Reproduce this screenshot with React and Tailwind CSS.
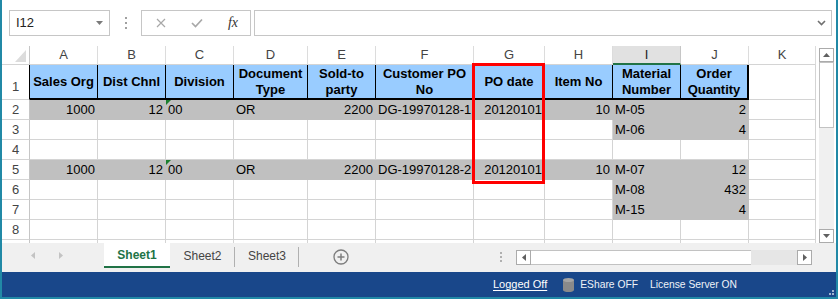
import React from 'react';
import clsx from 'clsx';

const COLW = ['w-[68px]','w-[68px]','w-[68px]','w-[74px]','w-[68px]','w-[98px]','w-[71px]','w-[68px]','w-[68px]','w-[68px]','w-[67px]'];
const LETTERS = ['A','B','C','D','E','F','G','H','I','J','K'];
const HEAD = [['Sales Org'],['Dist Chnl'],['Division'],['Document','Type'],['Sold-to','party'],['Customer PO','No'],['PO date'],['Item No'],['Material','Number'],['Order','Quantity'],null];

const g = (t, a) => ({ t, a, f: true });
const E = {};

const ROWS = [
  { k: 2, n: 2, cells: [g('1000','r'), g('12','r'), { t: '00', a: 'l', f: true, tri: true }, g('OR','l'), g('2200','r'), g('DG-19970128-1','l'), g('20120101','r'), g('10','r'), g('M-05','l'), g('2','r'), E] },
  { k: 3, n: 3, cells: [E, E, E, E, E, E, E, E, g('M-06','l'), g('4','r'), E] },
  { k: 4, n: 4, cells: [E, E, E, E, E, E, E, E, E, E, E] },
  { k: 5, n: 5, cells: [g('1000','r'), g('12','r'), { t: '00', a: 'l', f: true, tri: true }, g('OR','l'), g('2200','r'), g('DG-19970128-2','l'), g('20120101','r'), g('10','r'), g('M-07','l'), g('12','r'), E] },
  { k: 6, n: 6, cells: [E, E, E, E, E, E, E, E, g('M-08','l'), g('432','r'), E] },
  { k: 7, n: 7, cells: [E, E, E, E, E, E, E, E, g('M-15','l'), g('4','r'), E] },
  { k: 8, n: 8, cells: [E, E, E, E, E, E, E, E, E, E, E] },
  { k: 9, n: '', cells: [E, E, E, E, E, E, E, E, E, E, E] },
];

function DataRow({ n, cells }) {
  return (
    <div className="flex h-[20px] shrink-0">
      <div className="w-[28px] shrink-0 flex items-center justify-center border-r border-b border-r-[#c6c6c6] border-b-[#d4d4d4] text-[#444] text-[13px]">{n}</div>
      {COLW.map((w, i) => {
        const c = cells[i] || {};
        return (
          <div
            key={i}
            className={clsx(
              'relative shrink-0 h-full border-r border-b flex items-center whitespace-nowrap text-[13px] text-black',
              w,
              c.f ? 'bg-[#c0c0c0] border-[#c0c0c0]' : 'border-[#d4d4d4]',
              c.a === 'r' ? 'justify-end pr-[2px]' : 'justify-start pl-[2px]'
            )}
          >
            {c.tri && (
              <svg className="absolute top-0 left-0" width="5" height="5" viewBox="0 0 5 5">
                <polygon points="0,0 5,0 0,5" fill="#1a7f2e" />
              </svg>
            )}
            {c.t}
          </div>
        );
      })}
    </div>
  );
}

function Tri({ dir, color = '#606060', w = 7, h = 4 }) {
  let pts;
  if (dir === 'up') pts = `0,${h} ${w},${h} ${w / 2},0`;
  else if (dir === 'down') pts = `0,0 ${w},0 ${w / 2},${h}`;
  else if (dir === 'left') pts = `${w},0 ${w},${h} 0,${h / 2}`;
  else pts = `0,0 0,${h} ${w},${h / 2}`;
  return (
    <svg width={w} height={h} viewBox={`0 0 ${w} ${h}`}>
      <polygon points={pts} fill={color} />
    </svg>
  );
}

export default function App() {
  return (
    <div className="w-[838px] h-[299px] bg-white border-x-2 border-b-2 border-[#2189a6] flex flex-col overflow-hidden relative font-['Liberation_Sans',Arial,sans-serif]">
      {/* Formula bar */}
      <div className="h-[46px] shrink-0 flex items-start pt-[10px]">
        <div className="ml-[7px] w-[101px] h-[26px] border border-[#c6c6c6] flex items-center justify-between pl-[6px] pr-[6px]">
          <span className="text-[13px] text-[#222]">I12</span>
          <Tri dir="down" color="#7a7a7a" w={7} h={4} />
        </div>
        <div className="w-[31px] h-[26px] flex flex-col items-center justify-center gap-[3px]">
          <div className="w-[2px] h-[2px] bg-[#a0a0a0]" />
          <div className="w-[2px] h-[2px] bg-[#a0a0a0]" />
          <div className="w-[2px] h-[2px] bg-[#a0a0a0]" />
        </div>
        <div className="w-[110px] h-[26px] border border-[#c6c6c6] flex items-center">
          <div className="w-[36px] flex justify-center pl-[2px]">
            <svg width="10" height="10" viewBox="0 0 10 10">
              <path d="M1 1 L9 9 M9 1 L1 9" stroke="#a8a8a8" strokeWidth="1.2" fill="none" />
            </svg>
          </div>
          <div className="w-[38px] flex justify-center">
            <svg width="12" height="10" viewBox="0 0 12 10">
              <path d="M1 5 L4.5 8.5 L11 1.5" stroke="#a8a8a8" strokeWidth="1.7" fill="none" />
            </svg>
          </div>
          <div className="w-[34px] flex justify-center">
            <span className="font-['Liberation_Serif',serif] italic text-[14px] text-[#333] leading-none">fx</span>
          </div>
        </div>
        <div className="ml-[3px] w-[578px] h-[26px] border border-[#c6c6c6] flex items-center justify-end pr-[5px]">
          <svg width="9" height="6" viewBox="0 0 9 6">
            <path d="M1 1 L4.5 4.5 L8 1" stroke="#707070" strokeWidth="1.6" fill="none" />
          </svg>
        </div>
      </div>

      {/* Grid + vertical scrollbar */}
      <div className="h-[197px] shrink-0 flex">
        <div className="w-[814px] shrink-0 flex flex-col overflow-hidden">
          {/* column letters */}
          <div className="flex h-[19px] shrink-0">
            <div className="w-[28px] shrink-0 border-r border-b border-r-[#c6c6c6] border-b-[#d4d4d4] flex items-end justify-end pr-[3px] pb-[2px]">
              <svg width="11" height="12" viewBox="0 0 11 12">
                <polygon points="11,0 11,12 0,12" fill="#dcdcdc" />
              </svg>
            </div>
            {COLW.map((w, i) => (
              <div
                key={i}
                className={clsx(
                  'shrink-0 h-full border-r flex items-center justify-center text-[13px]',
                  w,
                  i === 8 ? 'bg-[#e1e1e1] border-r-[#c6c6c6] border-b-2 border-b-[#217346] text-[#222]' : 'border-r-[#dcdcdc] border-b border-b-[#d4d4d4] text-[#444]'
                )}
              >
                {LETTERS[i]}
              </div>
            ))}
          </div>
          {/* header row 1 */}
          <div className="flex h-[35px] shrink-0">
            <div className="w-[28px] shrink-0 flex items-end justify-center pb-[3px] border-r border-b border-r-black border-b-[#d4d4d4] text-[#444] text-[13px]">1</div>
            {COLW.map((w, i) =>
              HEAD[i] ? (
                <div
                  key={i}
                  className={clsx(
                    'shrink-0 h-full bg-[#99ccff] border-b-2 border-b-black flex flex-col items-center justify-center text-center font-bold text-[13px] leading-[16px] text-black whitespace-nowrap',
                    w,
                    i === 9 ? 'border-r-2 border-r-black' : 'border-r border-r-black'
                  )}
                >
                  {HEAD[i].map((l, k) => (
                    <div key={k}>{l}</div>
                  ))}
                </div>
              ) : (
                <div key={i} className={clsx('shrink-0 h-full border-r border-b border-[#d4d4d4]', w)} />
              )
            )}
          </div>
          {ROWS.map((r) => (
            <DataRow key={r.k} n={r.n} cells={r.cells} />
          ))}
        </div>
        <div className="w-[3px] shrink-0" />
        <div className="w-[15px] shrink-0 flex flex-col pt-[2px]">
          <div className="h-[14px] shrink-0 border border-[#ababab] bg-white flex items-center justify-center">
            <Tri dir="up" color="#606060" w={7} h={4} />
          </div>
          <div className="h-[66px] shrink-0 border border-[#c2c2c2] bg-white" />
          <div className="flex-1 bg-[#f0f0f0]" />
          <div className="h-[14px] shrink-0 border border-[#ababab] bg-white flex items-center justify-center">
            <Tri dir="down" color="#606060" w={7} h={4} />
          </div>
        </div>
      </div>

      {/* Sheet tabs + horizontal scrollbar */}
      <div className="h-[29px] shrink-0 bg-[#f0f0f0] flex items-start">
        <div className="w-[102px] h-[25px] shrink-0 flex items-center">
          <div className="ml-[29px]"><Tri dir="left" color="#c3c3c3" w={4} h={7} /></div>
          <div className="ml-[24px]"><Tri dir="right" color="#c3c3c3" w={4} h={7} /></div>
        </div>
        <div className="w-[66px] h-[25px] shrink-0 bg-white border-b-2 border-[#217346] flex items-center justify-center text-[12px] font-bold text-[#217346]">Sheet1</div>
        <div className="w-[65px] h-[25px] shrink-0 flex items-center justify-center text-[12px] text-[#444] relative">
          Sheet2
          <div className="absolute right-0 top-[4px] h-[20px] w-[1px] bg-[#b0b0b0]" />
        </div>
        <div className="w-[64px] h-[25px] shrink-0 flex items-center justify-center text-[12px] text-[#444] relative">
          Sheet3
          <div className="absolute right-0 top-[4px] h-[20px] w-[1px] bg-[#b0b0b0]" />
        </div>
        <div className="w-[84px] h-[25px] shrink-0 flex items-center justify-center pt-[2px]">
          <svg width="16" height="16" viewBox="0 0 16 16">
            <circle cx="8" cy="8" r="7" stroke="#7d7d7d" strokeWidth="1.3" fill="none" />
            <path d="M4.5 8 H11.5 M8 4.5 V11.5" stroke="#7d7d7d" strokeWidth="1.5" />
          </svg>
        </div>
        <div className="w-[133px] h-[25px] shrink-0 flex flex-col items-end justify-center gap-[2px] pr-[14px] pt-[3px]">
          <div className="w-[2px] h-[2px] bg-[#b0b0b0]" />
          <div className="w-[2px] h-[2px] bg-[#b0b0b0]" />
          <div className="w-[2px] h-[2px] bg-[#b0b0b0]" />
        </div>
        <div className="mt-[7px] w-[296px] h-[15px] shrink-0 flex">
          <div className="w-[15px] h-full border border-[#ababab] bg-white flex items-center justify-center">
            <Tri dir="left" color="#606060" w={4} h={7} />
          </div>
          <div className="w-[220px] h-full border-y border-[#c2c2c2] bg-white" />
          <div className="flex-1 h-full bg-[#e6e6e6]" />
          <div className="w-[15px] h-full border border-[#ababab] bg-white flex items-center justify-center">
            <Tri dir="right" color="#606060" w={4} h={7} />
          </div>
        </div>
      </div>

      {/* Status bar */}
      <div className="h-[25px] shrink-0 bg-[#19478a] flex items-center pl-[491px] relative">
        <span className="text-[11px] text-white underline underline-offset-2">Logged Off</span>
        <div className="ml-[16px] flex items-center">
          <svg width="11" height="14" viewBox="0 0 11 14">
            <rect x="0" y="2" width="11" height="10" fill="#8a8a8a" />
            <ellipse cx="5.5" cy="12" rx="5.5" ry="2" fill="#8a8a8a" />
            <ellipse cx="5.5" cy="2" rx="5.5" ry="2" fill="#a4a4a4" />
          </svg>
        </div>
        <span className="ml-[6px] text-[10.3px] text-[#eef2f8]">EShare OFF</span>
        <span className="ml-[12px] text-[10.3px] text-[#eef2f8]">License Server ON</span>
        <div className="absolute right-[2px] bottom-[2px] flex flex-col items-end gap-[1px]">
          <div className="w-[2px] h-[2px] bg-[#9fb3d0]" />
          <div className="flex gap-[1px]">
            <div className="w-[2px] h-[2px] bg-[#9fb3d0]" />
            <div className="w-[2px] h-[2px] bg-[#9fb3d0]" />
          </div>
        </div>
      </div>

      {/* annotation box */}
      <div className="absolute left-[470px] top-[63px] w-[73px] h-[121px] border-[3px] border-[#ff0000] pointer-events-none" />
    </div>
  );
}
